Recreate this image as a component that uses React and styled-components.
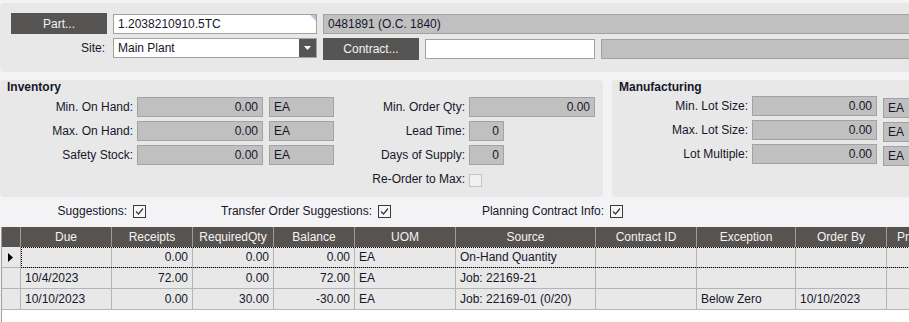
import React from 'react'
import styled, { createGlobalStyle } from 'styled-components'

const GlobalStyle = createGlobalStyle`
    html, body {
        margin: 0;
        padding: 0;
        background: #f3f3f5;
        overflow: hidden;
    }
    body {
        font-family: "Liberation Sans", Arial, sans-serif;
        font-size: 12px;
        color: #16162a;
    }
`

const Page = styled.div`
    display: flex;
    flex-direction: column;
    height: 100vh;
    width: 100%;
    overflow: hidden;
`

const HeaderPanel = styled.div`
    margin-top: 3px;
    background: #e8e8e8;
    border-radius: 4px;
    padding: 10px 0 12px 11px;
    display: flex;
    flex-direction: column;
    gap: 4px;
    width: 1000px;
`

const HeaderRow = styled.div`
    display: flex;
    align-items: ${p => p.$align || 'flex-start'};
    gap: 6px;
    height: ${p => p.$height}px;
`

const DarkButton = styled.div`
    width: 96px;
    height: ${p => p.$height || 21}px;
    background: #575553;
    color: #f2f2f2;
    display: flex;
    align-items: center;
    justify-content: center;
    flex-shrink: 0;
`

const FieldLabel = styled.div`
    width: ${p => p.$width}px;
    padding-right: ${p => p.$pad || 4}px;
    margin-top: ${p => p.$top || 0}px;
    align-self: center;
    box-sizing: border-box;
    text-align: right;
    white-space: nowrap;
    flex-shrink: 0;
`

const Field = styled.div`
    box-sizing: border-box;
    height: ${p => p.$height || 20}px;
    width: ${p => (p.$width ? p.$width + 'px' : 'auto')};
    flex: ${p => (p.$width ? '0 0 auto' : '1')};
    margin-top: ${p => p.$top || 0}px;
    background: ${p => (p.$white ? '#ffffff' : '#c0c0c0')};
    border: 1px solid #a2a2a2;
    padding: 0 4px 0 4px;
    display: flex;
    align-items: center;
    justify-content: ${p => (p.$right ? 'flex-end' : 'flex-start')};
    white-space: nowrap;
    overflow: hidden;
    position: relative;
`

const CornerMark = styled.span`
    position: absolute;
    top: 0;
    right: 0;
    width: 0;
    height: 0;
    border-top: 6px solid #b3c6e0;
    border-left: 6px solid transparent;
`

const Select = styled.div`
    box-sizing: border-box;
    width: 204px;
    height: 20px;
    background: #ffffff;
    border: 1px solid #a2a2a2;
    display: flex;
    align-items: stretch;
    flex-shrink: 0;
`

const SelectText = styled.div`
    flex: 1;
    padding-left: 4px;
    display: flex;
    align-items: center;
`

const SelectArrow = styled.div`
    width: 17px;
    background: #575553;
    display: flex;
    align-items: center;
    justify-content: center;
`

const Middle = styled.div`
    margin-top: 8px;
    display: flex;
    gap: 9px;
    height: 117px;
    flex-shrink: 0;
`

const GroupPanel = styled.div`
    background: #e8e8e8;
    border-radius: 4px;
    width: ${p => p.$width}px;
    flex-shrink: 0;
    display: flex;
    flex-direction: column;
`

const GroupTitle = styled.div`
    font-weight: bold;
    padding-left: 7px;
    height: 17px;
    line-height: 14px;
`

const GroupBody = styled.div`
    display: flex;
`

const FormGrid = styled.div`
    display: grid;
    grid-template-columns: ${p => p.$cols};
    grid-auto-rows: 20px;
    row-gap: 4px;
    align-items: center;
    margin-top: ${p => p.$top || 0}px;
`

const Unit = styled(Field)`
    margin-left: 6px;
    padding-left: 4px;
`

const Check = styled.div`
    width: 13px;
    height: 13px;
    box-sizing: border-box;
    border: 1px solid ${p => (p.$disabled ? '#c4c4c4' : '#3a3a3a')};
    background: ${p => (p.$disabled ? '#f0f0f0' : '#f8f8f8')};
    display: flex;
    align-items: center;
    justify-content: center;
    margin-top: ${p => p.$top || 0}px;
`

const OptionsBar = styled.div`
    height: 28px;
    display: flex;
    align-items: center;
    flex-shrink: 0;
`

const Option = styled.div`
    width: ${p => p.$width}px;
    display: flex;
    justify-content: flex-end;
    align-items: center;
    gap: 6px;
    flex-shrink: 0;
`

const Grid = styled.div`
    margin-top: 2px;
    margin-left: 1px;
    border-left: 1px solid #a0a0a0;
    background: #ffffff;
    flex: 1;
    width: 1100px;
`

const cols = '19px 91px 81px 81px 81px 101px 140px 101px 99px 91px 120px'

const GridRow = styled.div`
    display: grid;
    grid-template-columns: ${cols};
    height: ${p => (p.$head ? 20 : 21)}px;
    position: relative;

    &::after {
        content: ${p => (p.$focused ? "''" : 'none')};
        position: absolute;
        left: 19px;
        right: 0;
        top: 0;
        bottom: 0;
        border: 1px dotted #000;
        pointer-events: none;
    }
`

const HeadCell = styled.div`
    background: #575350;
    color: #f4f4f4;
    border-right: 1px solid #9e9c9a;
    box-sizing: border-box;
    display: flex;
    align-items: center;
    justify-content: ${p => (p.$start ? 'flex-start' : 'center')};
    padding-left: ${p => (p.$start ? 10 : 0)}px;
    white-space: nowrap;
    overflow: hidden;
`

const Cell = styled.div`
    background: #e8e8e8;
    border-right: 1px solid #b4b4b4;
    border-bottom: 1px solid #b4b4b4;
    box-sizing: border-box;
    padding: 0 4px;
    display: flex;
    align-items: center;
    justify-content: ${p => (p.$right ? 'flex-end' : p.$center ? 'center' : 'flex-start')};
    white-space: nowrap;
    overflow: hidden;
`

const CheckMark = () => (
    <svg width="11" height="11" viewBox="0 0 11 11">
        <path d="M2 5.5 L4.5 8 L9 2.5" fill="none" stroke="#3a3a3a" strokeWidth="1.2" />
    </svg>
)

const DownArrow = () => (
    <svg width="7" height="4" viewBox="0 0 7 4">
        <path d="M0 0 H7 L3.5 4 Z" fill="#ffffff" />
    </svg>
)

const RowPointer = () => (
    <svg width="6" height="9" viewBox="0 0 6 9">
        <path d="M0 0 L5 4.5 L0 9 Z" fill="#000000" />
    </svg>
)

const headers = ['', 'Due', 'Receipts', 'RequiredQty', 'Balance', 'UOM', 'Source', 'Contract ID', 'Exception', 'Order By']

const rows = [
    { due: '', receipts: '0.00', req: '0.00', bal: '0.00', uom: 'EA', source: 'On-Hand Quantity', contract: '', exception: '', orderBy: '', current: true },
    { due: '10/4/2023', receipts: '72.00', req: '0.00', bal: '72.00', uom: 'EA', source: 'Job: 22169-21', contract: '', exception: '', orderBy: '' },
    { due: '10/10/2023', receipts: '0.00', req: '30.00', bal: '-30.00', uom: 'EA', source: 'Job: 22169-01 (0/20)', contract: '', exception: 'Below Zero', orderBy: '10/10/2023' },
]

const inventoryLeft = [
    ['Min. On Hand:', '0.00'],
    ['Max. On Hand:', '0.00'],
    ['Safety Stock:', '0.00'],
]

const manufacturing = [
    ['Min. Lot Size:', '0.00'],
    ['Max. Lot Size:', '0.00'],
    ['Lot Multiple:', '0.00'],
]

export default function App() {
    return (
        <Page>
            <GlobalStyle />
            <HeaderPanel>
                <HeaderRow $height={21} $align="flex-end">
                    <DarkButton>Part...</DarkButton>
                    <Field $white $width={204}>
                        1.2038210910.5TC
                        <CornerMark />
                    </Field>
                    <Field>0481891 (O.C. 1840)</Field>
                </HeaderRow>
                <HeaderRow $height={22}>
                    <FieldLabel $width={96} $pad={2} $top={-2}>Site:</FieldLabel>
                    <Select>
                        <SelectText>Main Plant</SelectText>
                        <SelectArrow><DownArrow /></SelectArrow>
                    </Select>
                    <DarkButton $height={22}>Contract...</DarkButton>
                    <Field $white $width={170} $top={1} />
                    <Field $top={1} />
                </HeaderRow>
            </HeaderPanel>

            <Middle>
                <GroupPanel $width={603}>
                    <GroupTitle>Inventory</GroupTitle>
                    <GroupBody>
                        <FormGrid $cols="137px 126px auto">
                            {inventoryLeft.map(([label, value]) => (
                                <React.Fragment key={label}>
                                    <FieldLabel $width={137}>{label}</FieldLabel>
                                    <Field $right $width={126}>{value}</Field>
                                    <Unit $width={65}>EA</Unit>
                                </React.Fragment>
                            ))}
                        </FormGrid>
                        <FormGrid $cols="135px auto">
                            <FieldLabel $width={135}>Min. Order Qty:</FieldLabel>
                            <Field $right $width={126}>0.00</Field>
                            <FieldLabel $width={135}>Lead Time:</FieldLabel>
                            <Field $right $width={35}>0</Field>
                            <FieldLabel $width={135}>Days of Supply:</FieldLabel>
                            <Field $right $width={35}>0</Field>
                            <FieldLabel $width={135}>Re-Order to Max:</FieldLabel>
                            <Check $disabled $top={2} />
                        </FormGrid>
                    </GroupBody>
                </GroupPanel>
                <GroupPanel $width={400}>
                    <GroupTitle>Manufacturing</GroupTitle>
                    <FormGrid $cols="140px 125px auto" $top={-1}>
                        {manufacturing.map(([label, value]) => (
                            <React.Fragment key={label}>
                                <FieldLabel $width={140}>{label}</FieldLabel>
                                <Field $right $width={125}>{value}</Field>
                                <Unit $width={60} $top={3}>EA</Unit>
                            </React.Fragment>
                        ))}
                    </FormGrid>
                </GroupPanel>
            </Middle>

            <OptionsBar>
                <Option $width={146}>Suggestions: <Check><CheckMark /></Check></Option>
                <Option $width={245}>Transfer Order Suggestions: <Check><CheckMark /></Check></Option>
                <Option $width={232}>Planning Contract Info: <Check><CheckMark /></Check></Option>
            </OptionsBar>

            <Grid>
                <GridRow $head>
                    {headers.map((h, i) => (
                        <HeadCell key={i}>{h}</HeadCell>
                    ))}
                    <HeadCell $start>Pr</HeadCell>
                </GridRow>
                {rows.map((r, i) => (
                    <GridRow key={i} $focused={r.current}>
                        <Cell $center>{r.current && <RowPointer />}</Cell>
                        <Cell>{r.due}</Cell>
                        <Cell $right>{r.receipts}</Cell>
                        <Cell $right>{r.req}</Cell>
                        <Cell $right>{r.bal}</Cell>
                        <Cell>{r.uom}</Cell>
                        <Cell>{r.source}</Cell>
                        <Cell>{r.contract}</Cell>
                        <Cell>{r.exception}</Cell>
                        <Cell>{r.orderBy}</Cell>
                        <Cell />
                    </GridRow>
                ))}
            </Grid>
        </Page>
    )
}
